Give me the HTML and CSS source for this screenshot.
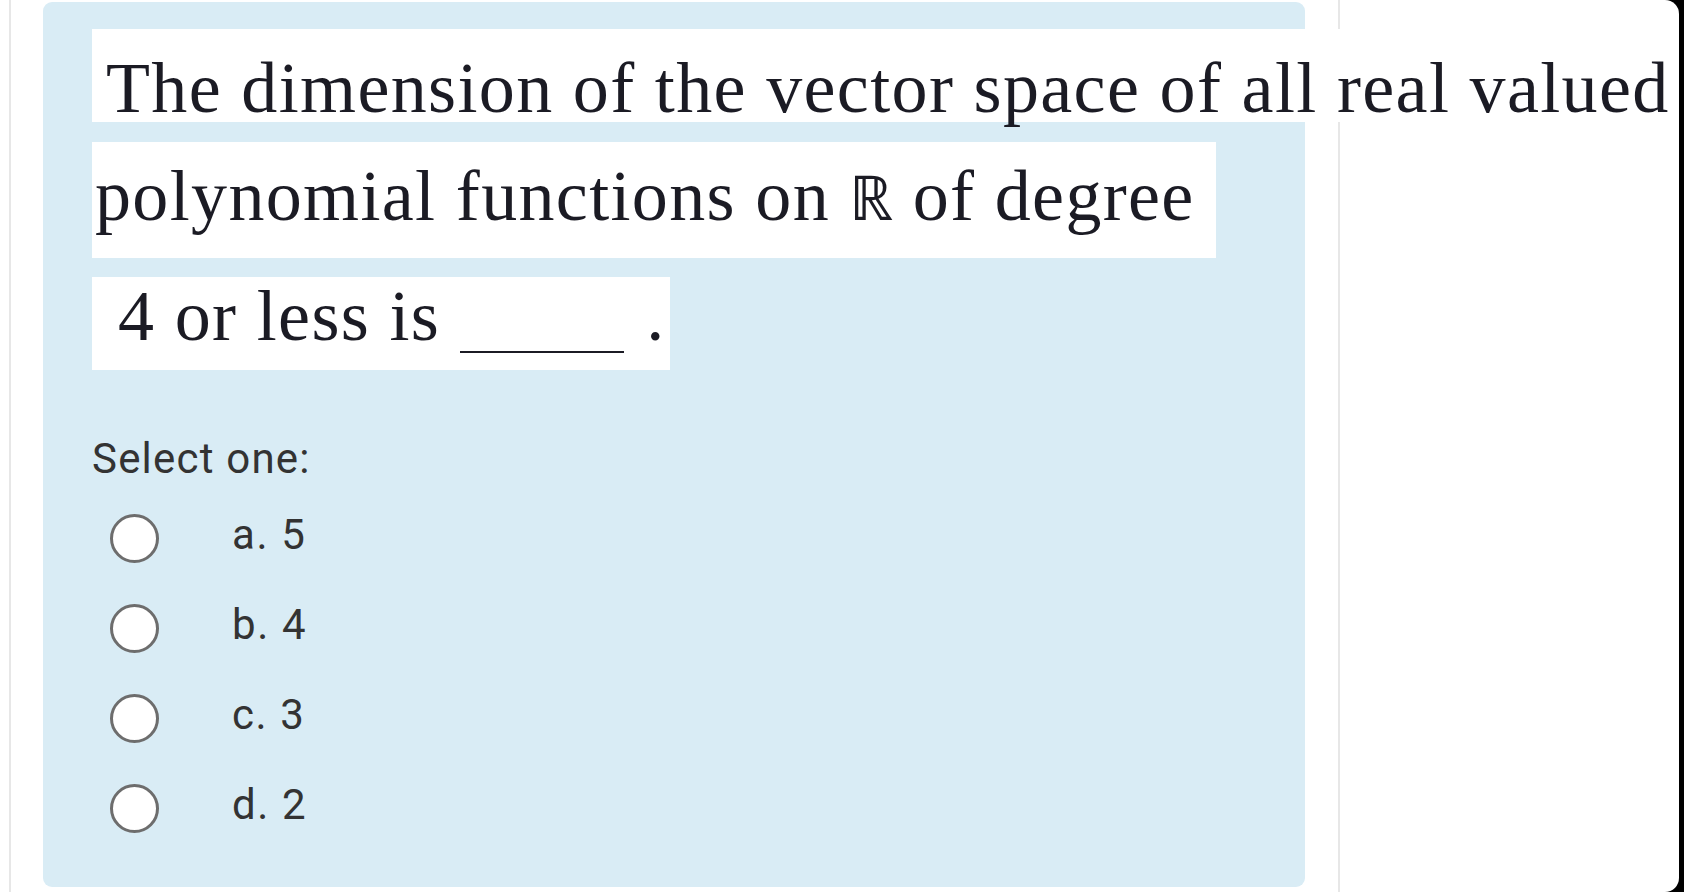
FILE: index.html
```html
<!DOCTYPE html>
<html lang="en">
<head>
<meta charset="utf-8">
<title>Question</title>
<link rel="stylesheet" href="styles.css">
</head>
<body>
<div class="screen">
  <div class="gutter"></div>
  <div class="main">
    <div class="panel">
      <div class="qline q1">The dimension of the vector space of all real valued</div>
      <div class="qline q2">polynomial functions on <span class="bb">ℝ</span> of degree</div>
      <div class="qline q3">4 or less is<span class="blank"></span><span class="dot">.</span></div>
      <div class="prompt">Select one:</div>
      <div class="answers">
        <div class="option"><span class="radio"></span><span class="label">a. 5</span></div>
        <div class="option"><span class="radio"></span><span class="label">b. 4</span></div>
        <div class="option"><span class="radio"></span><span class="label">c. 3</span></div>
        <div class="option"><span class="radio"></span><span class="label">d. 2</span></div>
      </div>
    </div>
  </div>
  <div class="side"></div>
</div>
</body>
</html>
```

FILE: styles.css
```css
html, body {
  margin: 0;
  padding: 0;
  background: #000;
}

.screen {
  display: flex;
  width: 1679px;
  height: 892px;
  background: #fff;
  border-radius: 0 14px 14px 0;
  overflow: hidden;
}

.gutter {
  flex: none;
  width: 9px;
  border-right: 2px solid #e7e7e7;
}

.main {
  flex: none;
  box-sizing: border-box;
  width: 1329px;
  padding: 2px 0 0 32px;
  border-right: 2px solid #e7e7e7;
}

.panel {
  box-sizing: border-box;
  width: 1262px;
  height: 885px;
  padding: 27px 0 0 49px;
  background: #d9ecf5;
  border-radius: 9px;
}

.qline {
  box-sizing: border-box;
  background: #fff;
  color: #1b1b24;
  font-family: "Liberation Serif", "DejaVu Serif", serif;
  font-size: 72px;
  line-height: 72px;
  letter-spacing: 1.35px;
  white-space: nowrap;
}

.q1 {
  width: 1584px;
  height: 93px;
  padding: 23px 0 0 14px;
}

.q2 {
  width: 1124px;
  height: 116px;
  margin-top: 20px;
  padding: 18px 0 0 3px;
  letter-spacing: 1.35px;
}

.q3 {
  width: 578px;
  height: 93px;
  margin-top: 19px;
  padding: 3px 0 0 26px;
}

.bb {
  font-family: "DejaVu Sans", sans-serif;
  font-size: 62px;
  font-weight: 300;
  letter-spacing: 0;
}

.blank {
  display: inline-block;
  width: 164px;
  height: 0;
  margin-left: 20px;
  border-bottom: 2px solid #1b1b24;
  vertical-align: -13px;
}

.dot {
  margin-left: 22px;
}

.prompt {
  margin-top: 64px;
  font-family: Roboto, "Noto Sans", sans-serif;
  font-size: 42px;
  line-height: 49px;
  letter-spacing: 1.2px;
  color: #333;
}

.answers {
  margin-top: 10px;
}

.option {
  display: flex;
  align-items: center;
  height: 90px;
  padding-left: 18px;
}

.radio {
  flex: none;
  box-sizing: border-box;
  width: 49px;
  height: 49px;
  border: 3px solid #6d6d6d;
  border-radius: 50%;
  background: #fff;
}

.label {
  margin-left: 73px;
  margin-bottom: 8px;
  font-family: Roboto, "Noto Sans", sans-serif;
  font-size: 42px;
  line-height: 49px;
  letter-spacing: 1.6px;
  color: #333;
}

.side {
  flex: 1;
}
```
